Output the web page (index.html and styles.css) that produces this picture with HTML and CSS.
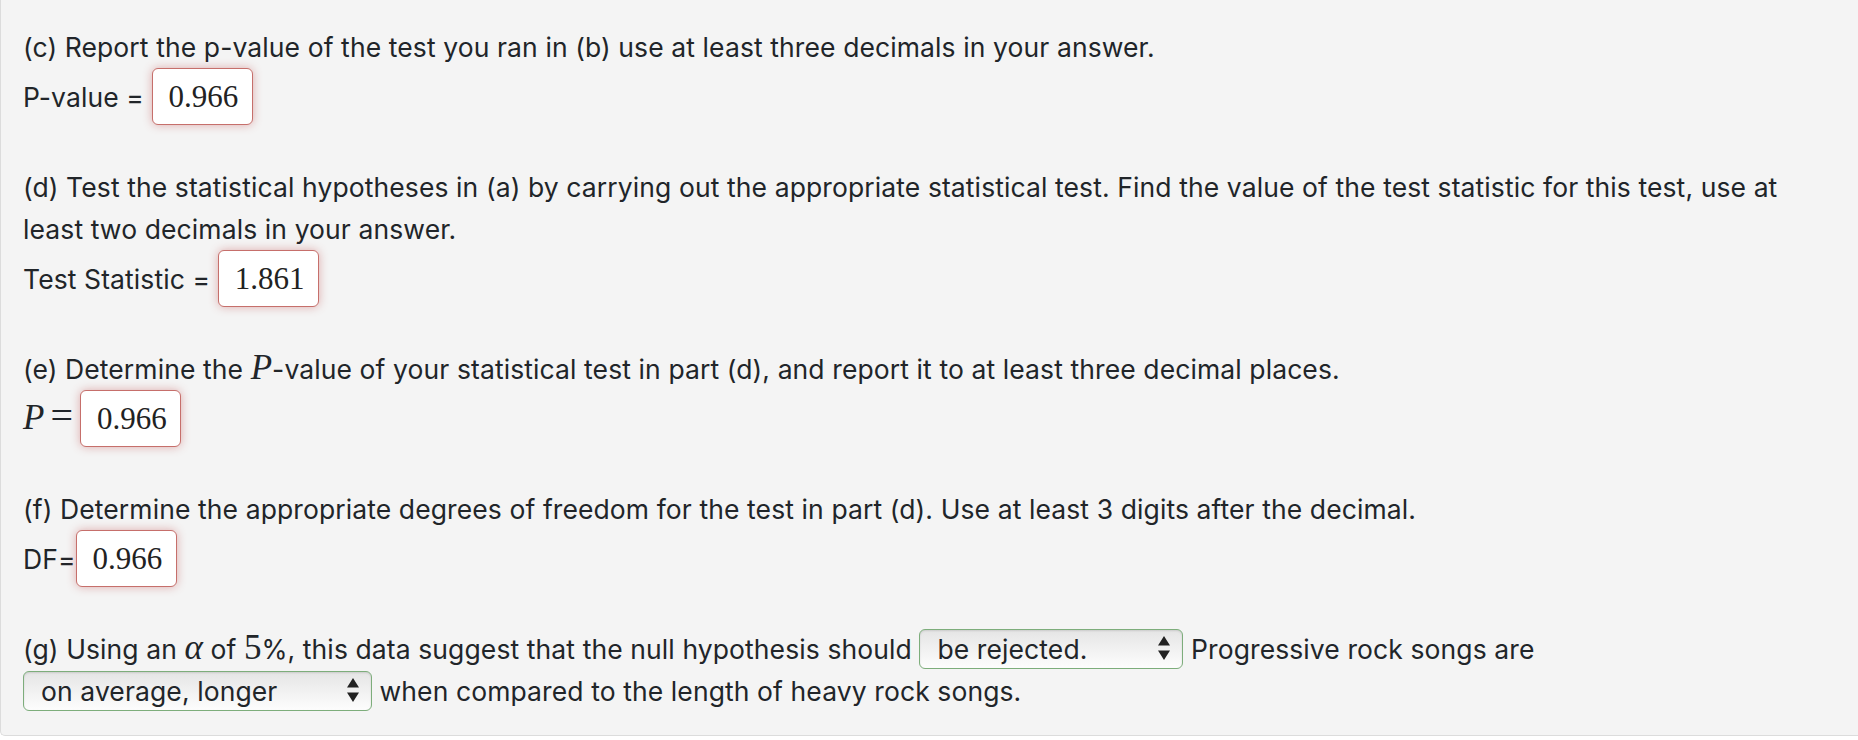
FILE: index.html
```html
<!DOCTYPE html>
<html lang="en">
<head>
    <meta charset="UTF-8">
    <title>Problem parts c-g</title>
    <link rel="stylesheet" href="styles.css">
</head>
<body>

<div class="problem">
    <p>(c) Report the p-value of the test you ran in (b) use at least three decimals in your answer.<br>
        P-value = <input class="answer" type="text" value="0.966"></p>

    <p>(d) Test the statistical hypotheses in (a) by carrying out the appropriate statistical test. Find the value of the test statistic for this test, use at least two decimals in your answer.<br>
        Test Statistic = <input class="answer" type="text" value="1.861"></p>

    <p>(e) Determine the <span class="math"><i>P</i></span>-value of your statistical test in part (d), and report it to at least three decimal places.<br>
        <span class="math"><i>P</i><span class="eq">=</span></span><input class="answer" type="text" value="0.966"></p>

    <p>(f) Determine the appropriate degrees of freedom for the test in part (d). Use at least 3 digits after the decimal.<br>
        DF=<input class="answer" type="text" value="0.966"></p>

    <p class="last">(g) Using an <span class="math"><i>α</i></span> of <span class="math">5</span>%, this data suggest that the null hypothesis should
        <span class="choice"><select class="short"><option>be rejected.</option><option>not be rejected.</option></select><svg width="12" height="24" viewBox="0 0 12 24"><path d="M6 0 L12 9.5 L0 9.5 Z M0 14.5 L12 14.5 L6 24 Z" fill="#222"/></svg></span>
        Progressive rock songs are
        <span class="choice"><select class="long"><option>on average, longer</option><option>on average, shorter</option></select><svg width="12" height="24" viewBox="0 0 12 24"><path d="M6 0 L12 9.5 L0 9.5 Z M0 14.5 L12 14.5 L6 24 Z" fill="#222"/></svg></span>
        when compared to the length of heavy rock songs.</p>
</div>

</body>
</html>
```

FILE: styles.css
```css
body {
    margin: 0;
    background-color: #ffffff;
    font-family: Inter, "Liberation Sans", Arial, sans-serif;
    color: #212529;
}
.problem {
    background-color: #f4f4f4;
    border-left: 1px solid #dcdcdc;
    border-bottom: 1px solid #dcdcdc;
    border-bottom-left-radius: 5px;
    padding: 26px 30px 23px 22px;
}
.problem p {
    margin: 0 0 41px;
    font-size: 26.5px;
    letter-spacing: 0.1px;
    line-height: 42px;
}
.problem p.last {
    margin-bottom: 0;
}
.math {
    font-family: "Liberation Serif", serif;
    font-size: 35px;
    line-height: 1;
    letter-spacing: 0;
}
.math .eq {
    font-size: 40px;
    margin: 0 7px 0 6px;
}
.answer {
    box-sizing: border-box;
    width: 101px;
    height: 57px;
    margin: 0;
    padding: 0 0 0 16px;
    font-family: "Liberation Serif", serif;
    font-size: 31px;
    letter-spacing: 0;
    color: #222;
    background-color: #ffffff;
    border: 1px solid #c66f6b;
    border-radius: 6px;
    box-shadow: 0 0 10px rgba(195, 85, 85, 0.45);
    outline: none;
}
.choice {
    position: relative;
    display: inline-block;
}
.choice select {
    appearance: none;
    -webkit-appearance: none;
    box-sizing: border-box;
    height: 40px;
    margin: 0;
    padding: 0 34px 0 17px;
    font-family: inherit;
    font-size: 26.5px;
    letter-spacing: 0.1px;
    color: #212529;
    border: 1px solid #7dad7b;
    border-radius: 6px;
    background: linear-gradient(#e5e5e5, #fdfdfd);
    box-shadow: inset 0 1px 2px rgba(0, 0, 0, 0.12);
}
.choice select.short {
    width: 264px;
}
.choice select.long {
    width: 349px;
}
.choice svg {
    position: absolute;
    right: 13px;
    top: 8px;
    pointer-events: none;
}
```
